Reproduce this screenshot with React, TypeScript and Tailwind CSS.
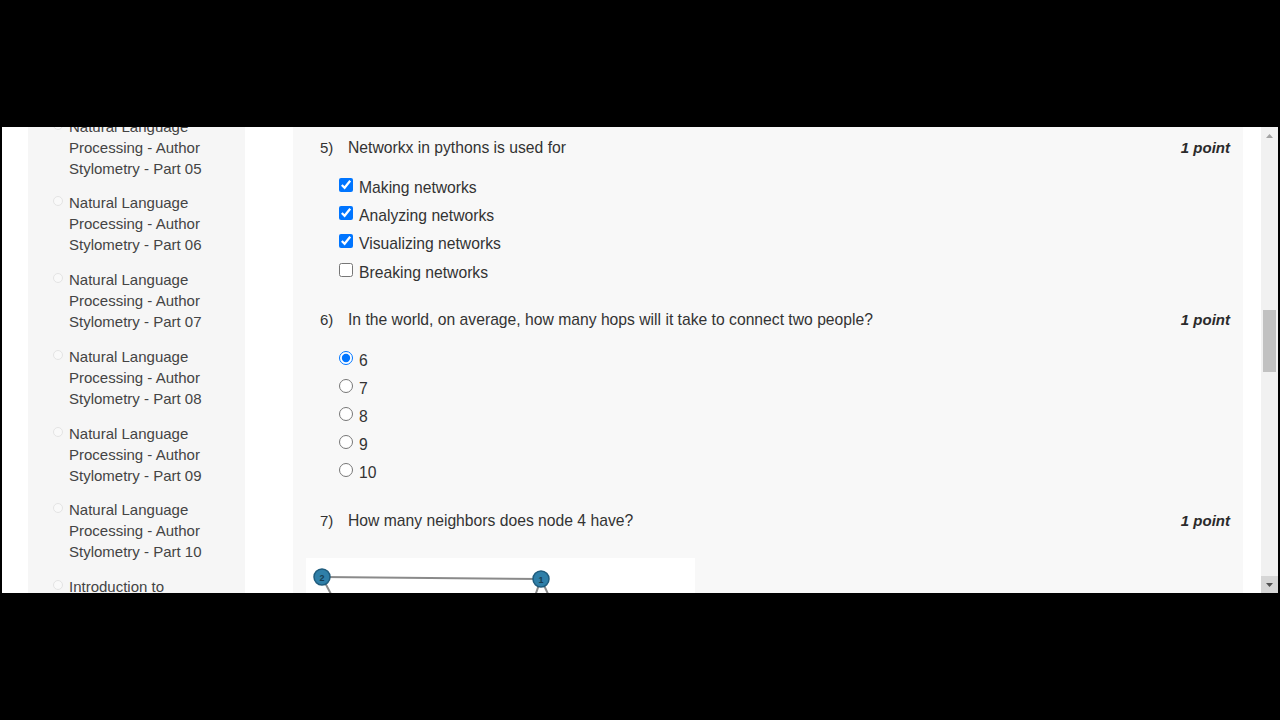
const lessons = ['05', '06', '07', '08', '09', '10'];

const q5Options = [
  { label: 'Making networks', checked: true },
  { label: 'Analyzing networks', checked: true },
  { label: 'Visualizing networks', checked: true },
  { label: 'Breaking networks', checked: false },
];

const q6Options = ['6', '7', '8', '9', '10'];

function QuestionTitle({ num, text }: { num: string; text: string }) {
  return (
    <div className="flex items-center h-[21px] leading-[21px] pl-[27px] pr-[13px]">
      <span className="w-[28px]">{num}</span>
      <span className="flex-1 text-[15.7px]">{text}</span>
      <span className="font-bold italic text-[15px] text-[#2b2b2b]">1 point</span>
    </div>
  );
}

function LessonItem({ title }: { title: string }) {
  return (
    <div className="flex items-start pl-[25px]">
      <span className="mt-[4px] w-[10px] h-[10px] rounded-full border border-[#e4e4e4] bg-[#f9f9f9] shrink-0" />
      <span className="ml-[6px] w-[150px] leading-[21px]">{title}</span>
    </div>
  );
}

function Sidebar() {
  return (
    <div className="w-[217px] h-full bg-[#f6f6f6] overflow-hidden text-[#444]">
      <div className="-mt-[11.5px] flex flex-col gap-[13.8px]">
        {lessons.map((part) => (
          <LessonItem key={part} title={`Natural Language Processing - Author Stylometry - Part ${part}`} />
        ))}
        <LessonItem title="Introduction to Network Analysis" />
      </div>
    </div>
  );
}

function GraphPreview() {
  return (
    <div className="ml-[13px] w-[389px] h-[60px] bg-white">
      <svg width="389" height="60" viewBox="0 0 389 60">
        <line x1="16" y1="19" x2="235" y2="21" stroke="#8a8a8a" strokeWidth="2" />
        <line x1="16" y1="19" x2="26" y2="38" stroke="#8a8a8a" strokeWidth="2" />
        <line x1="235" y1="21" x2="229" y2="38" stroke="#8a8a8a" strokeWidth="2" />
        <line x1="235" y1="21" x2="243" y2="38" stroke="#8a8a8a" strokeWidth="2" />
        <circle cx="16" cy="19" r="8" fill="#2f7fa8" stroke="#1f5c7d" strokeWidth="1.5" />
        <circle cx="235" cy="21" r="8" fill="#2f7fa8" stroke="#1f5c7d" strokeWidth="1.5" />
        <text x="16" y="22.5" fontSize="9" fontWeight="bold" textAnchor="middle" fill="#173d52" fontFamily="Liberation Sans, Arial, sans-serif">2</text>
        <text x="235" y="24.5" fontSize="9" fontWeight="bold" textAnchor="middle" fill="#173d52" fontFamily="Liberation Sans, Arial, sans-serif">1</text>
      </svg>
    </div>
  );
}

function Scrollbar() {
  return (
    <div className="w-[17px] h-full bg-[#f1f1f1] flex flex-col">
      <div className="h-[17px] flex items-center justify-center">
        <svg width="7" height="4" viewBox="0 0 7 4">
          <polygon points="0,4 7,4 3.5,0" fill="#a3a3a3" />
        </svg>
      </div>
      <div className="flex-1 px-[2px]">
        <div className="mt-[166px] h-[62px] bg-[#c1c1c1]" />
      </div>
      <div className="h-[17px] bg-[#d6d6d6] flex items-center justify-center">
        <svg width="7" height="4" viewBox="0 0 7 4">
          <polygon points="0,0 7,0 3.5,4" fill="#505050" />
        </svg>
      </div>
    </div>
  );
}

export default function App() {
  return (
    <div
      className="w-[1280px] h-[720px] bg-black flex flex-col text-[15px]"
      style={{ fontFamily: '"Liberation Sans", Arial, sans-serif' }}
    >
      <div className="h-[127px] shrink-0" />
      <div className="ml-[2px] w-[1276px] h-[466px] bg-white flex overflow-hidden">
        <div className="w-[26px] shrink-0" />
        <Sidebar />
        <div className="w-[48px] shrink-0" />
        <div className="w-[950px] h-full bg-[#f8f8f8] pt-[9.5px] text-[#333]">
          <QuestionTitle num="5)" text="Networkx in pythons is used for" />
          <div className="mt-[16px] flex flex-col">
            {q5Options.map((o) => (
              <label key={o.label} className="flex items-start h-[28.4px] pl-[46px]">
                <input
                  type="checkbox"
                  defaultChecked={o.checked}
                  className="m-0 mt-[4px] w-[14px] h-[14px] accent-[#0075ff]"
                />
                <span className="ml-[6px] leading-[28.4px] text-[15.7px]">{o.label}</span>
              </label>
            ))}
          </div>
          <div className="mt-[22px]">
            <QuestionTitle
              num="6)"
              text="In the world, on average, how many hops will it take to connect two people?"
            />
          </div>
          <div className="mt-[17px] flex flex-col">
            {q6Options.map((o) => (
              <label key={o} className="flex items-start h-[28px] pl-[46px]">
                <input
                  type="radio"
                  name="q6"
                  defaultChecked={o === '6'}
                  className="m-0 mt-[4px] w-[14px] h-[14px] accent-[#0075ff]"
                />
                <span className="ml-[6px] leading-[28px] text-[15.7px]">{o}</span>
              </label>
            ))}
          </div>
          <div className="mt-[23px]">
            <QuestionTitle num="7)" text="How many neighbors does node 4 have?" />
          </div>
          <div className="mt-[26.5px]">
            <GraphPreview />
          </div>
        </div>
        <div className="w-[18px] shrink-0" />
        <Scrollbar />
      </div>
    </div>
  );
}
